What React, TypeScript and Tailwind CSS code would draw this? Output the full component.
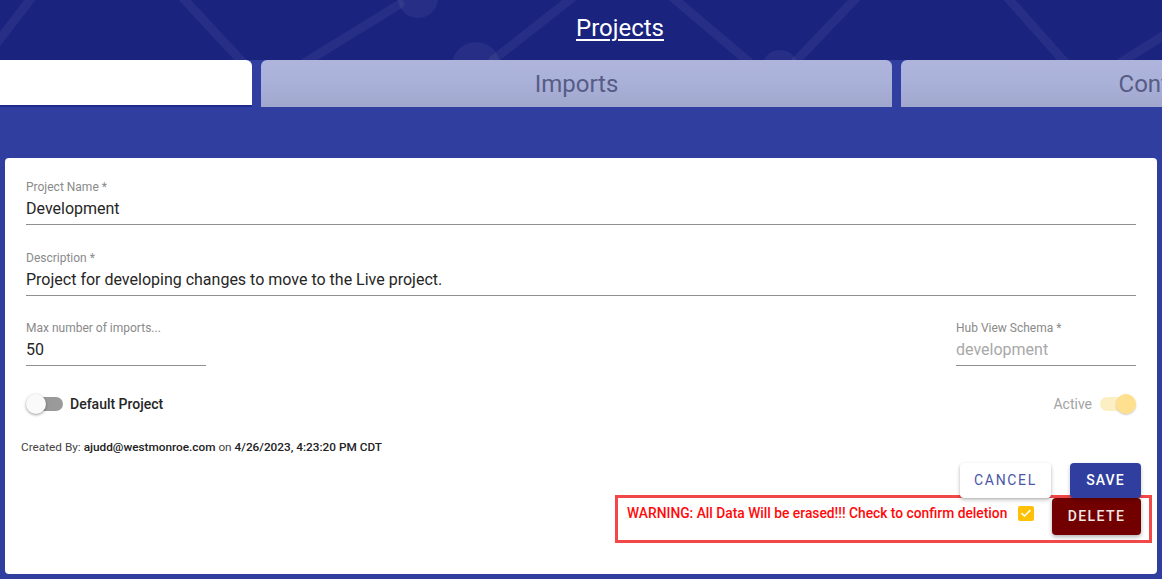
import React from "react";

function HeaderPattern() {
  return (
    <svg
      className="absolute inset-0 pointer-events-none"
      width="1162"
      height="60"
      viewBox="0 0 1162 60"
      fill="none"
    >
      <g stroke="#ffffff" strokeOpacity="0.055" strokeWidth="9" strokeLinecap="round">
        <path d="M -4 44 L 33 -4" />
        <path d="M 181 -4 L 248 68" />
        <path d="M 296 68 L 400 4" />
        <path d="M 493 60 L 572 -2" />
        <path d="M 671 -4 L 756 68" />
        <path d="M 795 62 L 858 -4" />
        <path d="M 1006 -4 L 1070 68" />
        <path d="M 1112 68 L 1166 34" />
      </g>
      <g fill="#ffffff" fillOpacity="0.055">
        <circle cx="418" cy="-2" r="20" />
        <circle cx="476" cy="66" r="24" />
        <circle cx="780" cy="68" r="18" />
      </g>
    </svg>
  );
}

function Field({
  label,
  value,
  disabled,
  className,
}: {
  label: string;
  value: string;
  disabled?: boolean;
  className?: string;
}) {
  return (
    <div className={className}>
      <div className="h-[14px] text-[12px] leading-[14px] text-[#8a8a8a] whitespace-nowrap">
        {label}
      </div>
      <div
        className={`mt-[5px] h-[19px] text-[16px] leading-[19px] whitespace-nowrap ${
          disabled ? "text-[#a8a8a8]" : "text-[#262626]"
        }`}
      >
        {value}
      </div>
      <div className="mt-[6px] border-b border-[#8f8f8f]" />
    </div>
  );
}

export default function App() {
  return (
    <div className="w-[1162px] h-[579px] overflow-hidden bg-[#303f9f] font-[Roboto,sans-serif]">
      {/* Header */}
      <div className="relative h-[60px] bg-[#1a237e] flex items-center justify-center pl-[78px] pb-[4px]">
        <HeaderPattern />
        <span className="relative text-white text-[24px] leading-[28px] underline underline-offset-[3px] decoration-[2px]">
          Projects
        </span>
      </div>

      {/* Tabs */}
      <div className="flex gap-[9px] ml-[-379px] h-[47px]">
        <div className="w-[631px] shrink-0 h-[47px] rounded-t-[6px] bg-white border-b-2 border-[#1f2b8c]" />
        <div className="w-[631px] shrink-0 h-[47px] rounded-t-[6px] bg-gradient-to-b from-[#aeb4db] via-[#aab1d9] to-[#a0a6cc] flex items-center justify-center">
          <span className="text-[24px] leading-[28px] text-[#575c86]">Imports</span>
        </div>
        <div className="w-[631px] shrink-0 h-[47px] rounded-t-[6px] bg-gradient-to-b from-[#aeb4db] via-[#aab1d9] to-[#a0a6cc] flex items-center justify-center">
          <span className="text-[24px] leading-[28px] text-[#575c86] ml-[-52px]">Configuration</span>
        </div>
      </div>

      {/* Card */}
      <div className="mx-[5px] mt-[51px] h-[416px] bg-white rounded-[4px] pt-[22px]">
        <div className="px-[21px]">
          <Field label="Project Name *" value="Development" />
          <Field
            className="mt-[26px]"
            label="Description *"
            value="Project for developing changes to move to the Live project."
          />
          <div className="mt-[25px] flex justify-between">
            <Field className="w-[180px]" label="Max number of imports..." value="50" />
            <Field className="w-[180px]" label="Hub View Schema *" value="development" disabled />
          </div>

          <div className="mt-[26px] h-[24px] flex items-center justify-between">
            <div className="flex items-center">
              <div className="relative w-[37px] h-[20px] flex items-center">
                <div className="absolute left-[3px] w-[34px] h-[14px] rounded-full bg-[#9a9a9a]" />
                <div className="absolute left-0 w-[20px] h-[20px] rounded-full bg-[#fafafa] shadow-[0_1px_3px_rgba(0,0,0,0.4)]" />
              </div>
              <span className="ml-[7px] text-[14px] font-medium text-[#262626]">Default Project</span>
            </div>
            <div className="flex items-center">
              <span className="text-[14px] text-[#a3a3a3]">Active</span>
              <div className="relative ml-[8px] w-[36px] h-[20px] flex items-center">
                <div className="absolute left-0 w-[34px] h-[14px] rounded-full bg-[#fdefc4]" />
                <div className="absolute right-0 w-[20px] h-[20px] rounded-full bg-[#ffe08f] shadow-[0_1px_2px_rgba(0,0,0,0.2)]" />
              </div>
            </div>
          </div>
        </div>

        <div className="mt-[24px] ml-[16px] h-[14px] text-[11.8px] leading-[14px] text-[#444] whitespace-nowrap">
          Created By: <span className="font-medium text-[#222]">ajudd@westmonroe.com</span> on{" "}
          <span className="font-medium text-[#222]">4/26/2023, 4:23:20 PM CDT</span>
        </div>

        <div className="relative z-10 mt-[9px] pr-[16px] flex justify-end gap-[19px]">
          <button className="w-[91px] h-[35px] rounded-[4px] bg-white shadow-[0_2px_4px_rgba(0,0,0,0.22),0_1px_2px_rgba(0,0,0,0.12)] text-[14px] font-normal tracking-[0.12em] text-[#4a56a6]">
            CANCEL
          </button>
          <button className="w-[71px] h-[35px] rounded-[4px] bg-[#303f9f] shadow-[0_2px_4px_rgba(0,0,0,0.22)] text-[14px] font-medium tracking-[0.08em] text-white">
            SAVE
          </button>
        </div>

        <div className="mt-[-3px] flex justify-end pr-[5px]">
          <div className="w-[537px] h-[48px] border-[3px] border-[#f24848] flex items-start pl-[9px] pr-[8px]">
            <div className="h-[30px] flex items-center text-[13.8px] font-medium text-[#ff0a0a] whitespace-nowrap">
              WARNING: All Data Will be erased!!! Check to confirm deletion
            </div>
            <div className="ml-auto h-[30px] flex items-center">
              <div className="w-[16px] h-[15px] rounded-[2px] bg-[#ffc107] flex items-center justify-center">
                <svg width="12" height="10" viewBox="0 0 12 10" fill="none">
                  <path d="M1.5 5.2 L4.5 8 L10.5 2" stroke="#ffffff" strokeWidth="1.6" />
                </svg>
              </div>
            </div>
            <button className="ml-[18px] w-[89px] h-[37px] rounded-[4px] bg-[#720000] shadow-[0_2px_4px_rgba(0,0,0,0.3)] text-[14px] font-medium tracking-[0.1em] text-[#f3e6e6]">
              DELETE
            </button>
          </div>
        </div>
      </div>
    </div>
  );
}
